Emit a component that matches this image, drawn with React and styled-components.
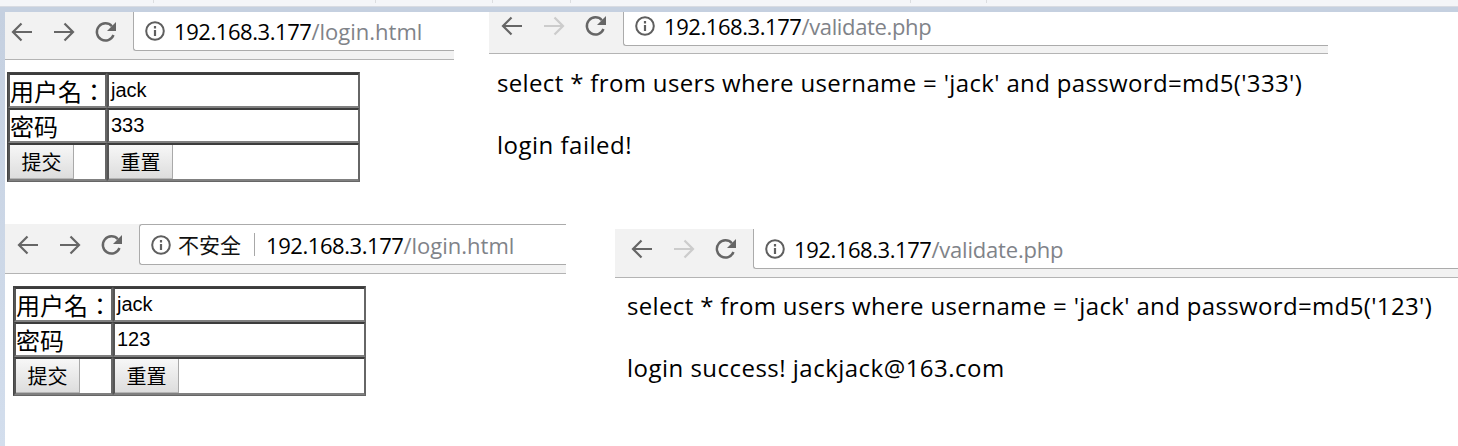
import React from "react";
import styled, { createGlobalStyle } from "styled-components";

const GlobalStyle = createGlobalStyle`
  html, body {
    margin: 0;
    padding: 0;
    background: #fff;
  }
`;

const Desktop = styled.div`
  position: relative;
  width: 1458px;
  height: 446px;
  overflow: hidden;
  background: #fff;
`;

const TabStrip = styled.div`
  height: 6px;
  background: #f4f5f8;
  border-bottom: 1px solid #d8dbe2;
`;

const TopBand = styled.div`
  height: 5px;
  background: #c5d0e0;
`;

const LeftBand = styled.div`
  position: absolute;
  left: 0;
  top: 12px;
  bottom: 0;
  width: 5px;
  background: linear-gradient(#c5d0e0, #d3deed);
`;

const Tick = styled.i`
  position: absolute;
  top: 0;
  left: ${(p) => p.$x}px;
  width: 1px;
  height: 3px;
  background: #dcdde0;
`;

/* each pasted screenshot sits on the canvas at its own place */
const Shot = styled.section`
  position: absolute;
  left: ${(p) => p.$x}px;
  top: ${(p) => p.$y}px;
  width: ${(p) => p.$w}px;
`;

const Toolbar = styled.div`
  display: flex;
  height: ${(p) => p.$h}px;
  background: #f2f2f2;
  border-bottom: 1px solid #b4b4b4;
  box-sizing: border-box;
  padding-bottom: ${(p) => p.$gap}px;
`;

const NavButtons = styled.div`
  display: flex;
  align-items: center;
  width: ${(p) => p.$w}px;
  flex: none;
  padding-left: ${(p) => p.$pad}px;
  padding-bottom: ${(p) => p.$lift}px;
  box-sizing: border-box;
  gap: 18px;
`;

const Address = styled.div`
  flex: 1;
  display: flex;
  align-items: center;
  background: #fff;
  border-left: 1px solid #ababab;
  border-bottom: 1px solid #ababab;
  border-top: ${(p) => (p.$top ? "1px solid #ababab" : "0")};
  border-bottom-left-radius: 3px;
  border-top-left-radius: ${(p) => (p.$top ? "3px" : "0")};
  padding-left: 11px;
  padding-bottom: ${(p) => p.$lift}px;
  font: 22px "Open Sans", sans-serif;
  white-space: nowrap;
  overflow: hidden;
`;

const Host = styled.span`
  color: #000;
  margin-left: ${(p) => (p.$warn ? 11 : 9)}px;
  letter-spacing: -0.44px;
`;

const Path = styled.span`
  color: #7f8389;
  letter-spacing: ${(p) => p.$ls}px;
`;

const Warning = styled.span`
  font: 21px "Noto Sans CJK SC", sans-serif;
  color: #111;
  margin-left: 7px;
  padding-right: 13px;
  border-right: 1px solid #a8a8a8;
  line-height: 23px;
`;

const FormTable = styled.table`
  position: absolute;
  left: ${(p) => p.$x}px;
  top: ${(p) => p.$y}px;
  width: 353px;
  height: 110px;
  table-layout: fixed;
  border-collapse: separate;
  border-spacing: 0;
  border: 1px solid;
  border-color: #444 #666 #666 #444;
  box-sizing: border-box;
  background: #fff;
`;

const Cell = styled.td`
  border-style: solid;
  border-width: 2px ${(p) => (p.$last ? 1 : 2)}px 2px 2px;
  border-color: #3c3c3c #666 #808080 #555;
  padding: 0;
  height: ${(p) => p.$h}px;
  font: 24px "Noto Sans CJK TC", "Noto Sans CJK SC", sans-serif;
  color: #000;
  white-space: nowrap;
  line-height: 30px;
  overflow: hidden;
`;

const LabelCol = styled.col`
  width: 99px;
`;

const Value = styled.div`
  font: 20px "Liberation Sans", sans-serif;
  padding-left: 2px;
`;

const Btn = styled.button`
  display: block;
  width: 64px;
  height: 34px;
  padding: 0;
  border: 0;
  border-right: 1px solid #a9a9a9;
  border-bottom: 1px solid #b5b5b5;
  background: linear-gradient(#f7f7f7, #dddddd);
  font: 20px "Noto Sans CJK SC", sans-serif;
  color: #000;
`;

const Message = styled.p`
  margin: ${(p) => p.$top}px 0 0 ${(p) => p.$left}px;
  font: 24px/32px "Open Sans", sans-serif;
  letter-spacing: ${(p) => p.$ls}px;
  color: #000;
  white-space: nowrap;
`;

const Back = () => (
  <svg width="24" height="24" viewBox="0 0 24 24" fill="none" stroke="#666" strokeWidth="2.2">
    <path d="M22 12H3M11.5 3.5L3 12l8.5 8.500" />
  </svg>
);

const Forward = ({ off }) => (
  <svg width="24" height="24" viewBox="0 0 24 24" fill="none" stroke={off ? "#ccc" : "#666"} strokeWidth="2.2">
    <path d="M2 12h19M12.500 3.500L21 12l-8.500 8.500" />
  </svg>
);

const Reload = () => (
  <svg width="24" height="24" viewBox="0 0 24 24" fill="none">
    <path d="M19.500 15a8.600 8.600 0 1 1-1.600-8.800" stroke="#666" strokeWidth="2.400" />
    <path d="M22 2v9h-9z" fill="#666" />
  </svg>
);

const Info = () => (
  <svg width="20" height="20" viewBox="0 0 20 20" fill="none">
    <circle cx="10" cy="10" r="8.800" stroke="#5f5f5f" strokeWidth="2" />
    <path d="M10 9v6M10 5v2.400" stroke="#5f5f5f" strokeWidth="2.200" />
  </svg>
);

const Browser = ({ x, y, w, h, gap, navW, pad, top, off, warn, path, ls = 0, lift = 0, children }) => (
  <Shot $x={x} $y={y} $w={w}>
    <Toolbar $h={h} $gap={gap}>
      <NavButtons $w={navW} $pad={pad} $lift={lift}>
        <Back />
        <Forward off={off} />
        <Reload />
      </NavButtons>
      <Address $top={top} $lift={lift}>
        <Info />
        {warn && <Warning>不安全</Warning>}
        <Host $warn={warn}>192.168.3.177</Host>
        <Path $ls={ls}>{path}</Path>
      </Address>
    </Toolbar>
    {children}
  </Shot>
);

const LoginForm = ({ x, y, pass }) => (
  <FormTable $x={x} $y={y}>
    <colgroup>
      <LabelCol />
      <col />
    </colgroup>
    <tbody>
      <tr>
        <Cell $h={31}>用户名：</Cell>
        <Cell $h={31} $last><Value>jack</Value></Cell>
      </tr>
      <tr>
        <Cell $h={31}>密码</Cell>
        <Cell $h={31} $last><Value>{pass}</Value></Cell>
      </tr>
      <tr>
        <Cell $h={34}><Btn>提交</Btn></Cell>
        <Cell $h={34} $last><Btn>重置</Btn></Cell>
      </tr>
    </tbody>
  </FormTable>
);

export default function App() {
  return (
    <Desktop>
      <GlobalStyle />
      <TabStrip />
      <TopBand />
      <LeftBand />
      {[153, 375, 492, 570, 910, 986].map((x) => (
        <Tick key={x} $x={x} />
      ))}
      <Browser x={5} y={12} w={449} h={48} gap={8} navW={128} pad={5} path="/login.html" />
      <LoginForm x={7} y={72} pass="333" />
      <Browser x={489} y={12} w={839} h={42} gap={7} navW={134} pad={11} off ls={-0.35} lift={6} path="/validate.php">
        <Message $top={13} $left={8} $ls={0.35}>select * from users where username = 'jack' and password=md5('333')</Message>
        <Message $top={30} $left={8} $ls={0.5}>login failed!</Message>
      </Browser>
      <Browser x={5} y={224} w={561} h={50} gap={8} navW={134} pad={11} top warn path="/login.html" />
      <LoginForm x={13} y={286} pass="123" />
      <Browser x={615} y={229} w={843} h={49} gap={8} navW={138} pad={15} off ls={-0.2} path="/validate.php">
        <Message $top={12} $left={12} $ls={0.35}>select * from users where username = 'jack' and password=md5('123')</Message>
        <Message $top={30} $left={12} $ls={0.48}>login success! jackjack@163.com</Message>
      </Browser>
    </Desktop>
  );
}
